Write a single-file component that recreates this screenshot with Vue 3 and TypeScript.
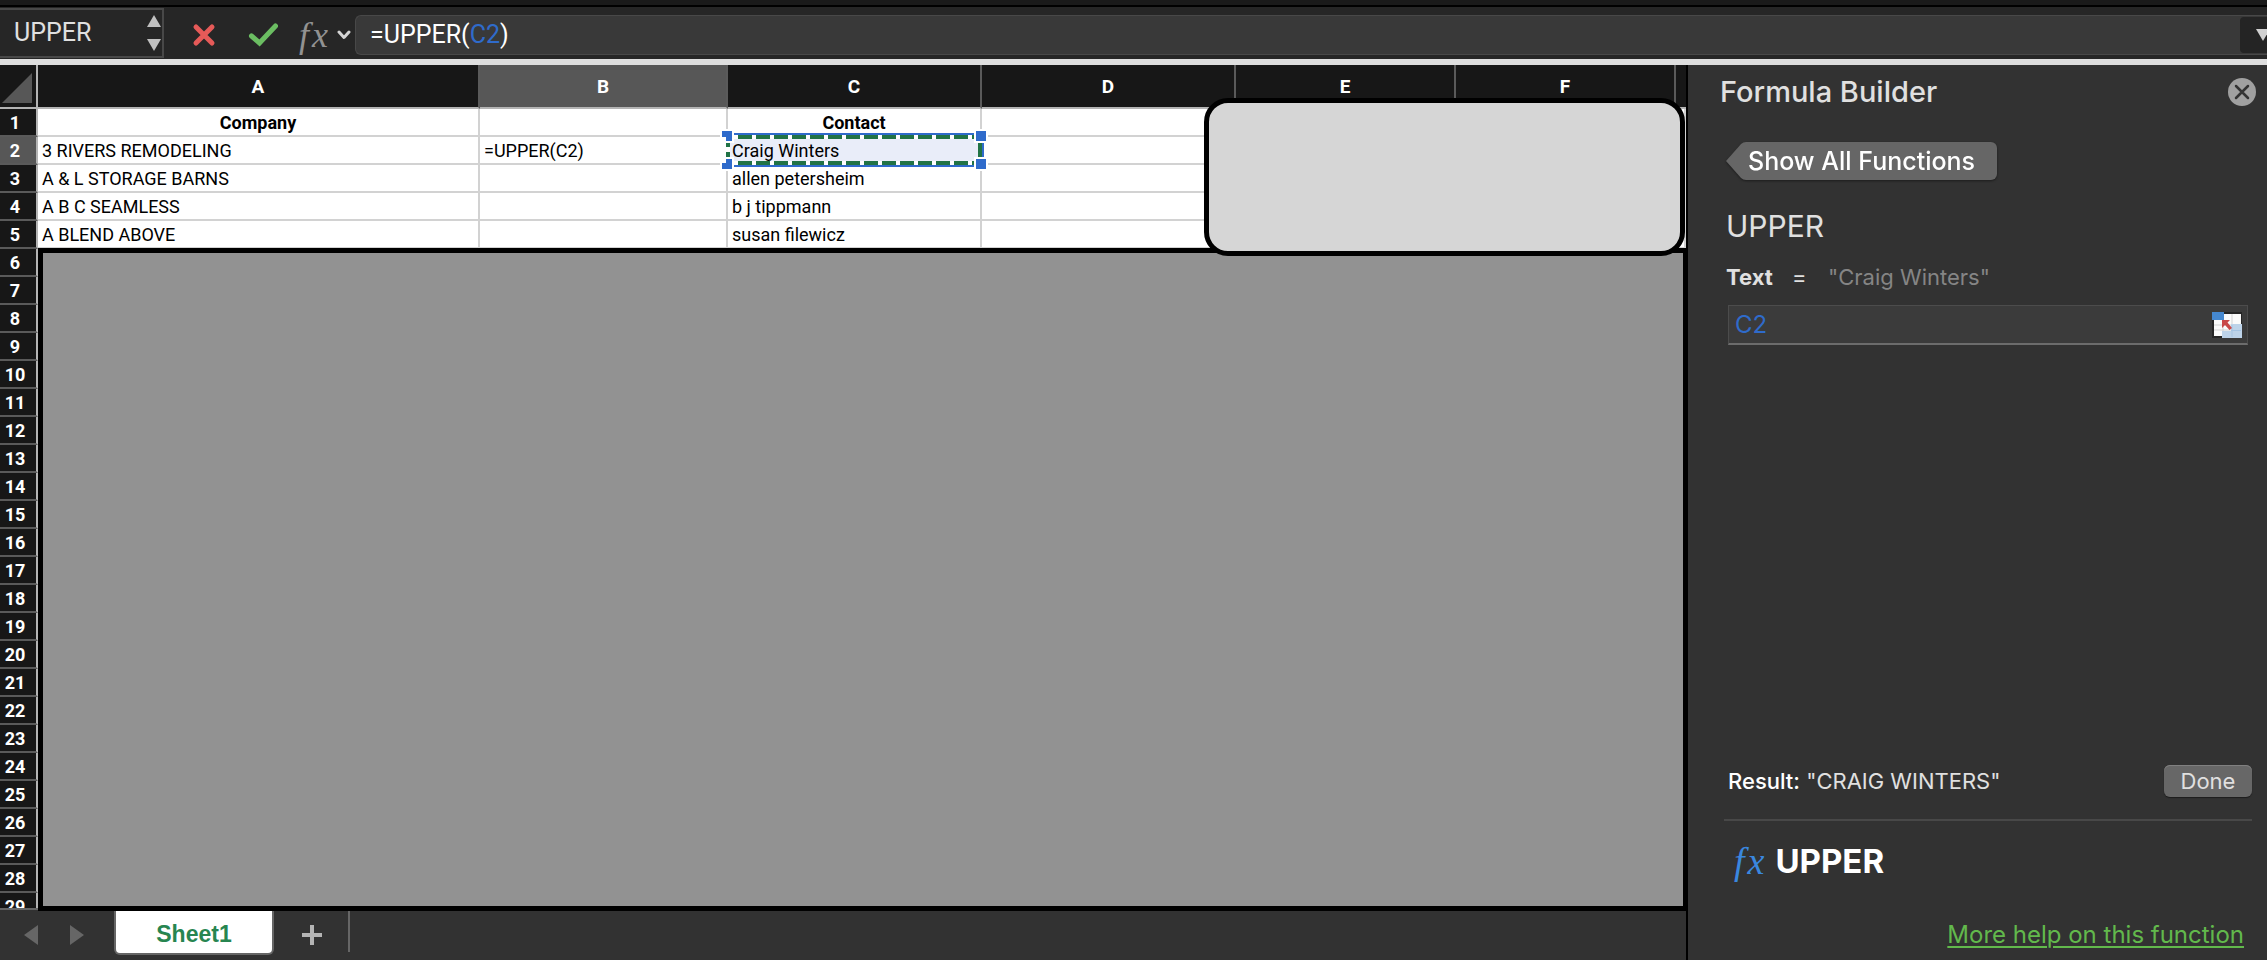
<script setup lang="ts">
import { computed, ref } from 'vue'

interface Column { name: string; active?: boolean }
interface Row { a: string; c: string }

const columns: Column[] = [
  { name: 'A' }, { name: 'B', active: true }, { name: 'C' }, { name: 'D' }, { name: 'E' }, { name: 'F' },
]

const records: Row[] = [
  { a: '3 RIVERS REMODELING', c: 'Craig Winters' },
  { a: 'A & L STORAGE BARNS', c: 'allen petersheim' },
  { a: 'A B C SEAMLESS', c: 'b j tippmann' },
  { a: 'A BLEND ABOVE', c: 'susan filewicz' },
]

const blankRows = Array.from({ length: 24 }, (_, i) => i + 6)

const nameBox = ref('UPPER')
const formula = ref('=UPPER(C2)')
const argument = ref('C2')

// Cell references in the formula are drawn in the colour of their range outline.
const tokens = computed(() =>
  formula.value.split(/([A-Z]+\d+)/).filter(Boolean).map(text => ({ text, isRef: /^[A-Z]+\d+$/.test(text) })),
)
</script>

<template>
  <div class="app">
    <header class="formula-bar">
      <div class="name-box">
        <input v-model="nameBox" class="name-input" type="text" aria-label="Name box">
        <div class="stepper">
          <button type="button" aria-label="Previous name"><svg width="14" height="12" viewBox="0 0 14 12"><path d="M7 0L14 12H0Z" fill="#c0c0c0" /></svg></button>
          <button type="button" aria-label="Next name"><svg width="14" height="12" viewBox="0 0 14 12"><path d="M0 0H14L7 12Z" fill="#c0c0c0" /></svg></button>
        </div>
      </div>
      <div class="tools">
        <button type="button" class="tool" aria-label="Cancel">
          <svg width="24" height="24" viewBox="0 0 24 24"><path d="M4 4L20 20M20 4L4 20" stroke="#e65a58" stroke-width="5" stroke-linecap="round" /></svg>
        </button>
        <button type="button" class="tool" aria-label="Enter">
          <svg width="30" height="24" viewBox="0 0 30 24"><path d="M3.500 13L11.500 20L27.500 3" fill="none" stroke="#6bbd62" stroke-width="5" stroke-linecap="round" stroke-linejoin="miter" /></svg>
        </button>
        <button type="button" class="tool fx" aria-label="Insert function">
          <span class="fx-mark"><span>f</span><span>x</span></span>
          <svg width="14" height="10" viewBox="0 0 14 10"><path d="M2 2L7 7.500L12 2" fill="none" stroke="#d4d4d4" stroke-width="3" stroke-linecap="round" stroke-linejoin="round" /></svg>
        </button>
      </div>
      <div class="formula-field">
        <div class="formula-text" aria-hidden="true"><span v-for="(t, i) in tokens" :key="i" :class="{ reference: t.isRef }">{{ t.text }}</span></div>
        <input v-model="formula" class="formula-input" type="text" aria-label="Formula">
        <button type="button" class="expand" aria-label="Expand formula bar"><svg width="14" height="12" viewBox="0 0 14 12"><path d="M0 0H14L7 12Z" fill="#d0d0d0" /></svg></button>
      </div>
    </header>

    <div class="body">
      <main class="workbook">
        <div class="grid-area">
          <div class="grid-scroll">
            <table class="grid">
              <colgroup>
                <col class="w-num"><col class="w-a"><col class="w-b"><col class="w-c"><col class="w-c"><col class="w-e"><col class="w-e"><col>
              </colgroup>
              <thead>
                <tr>
                  <th class="corner"><svg width="30" height="30" viewBox="0 0 30 30"><path d="M30 0V30H0Z" fill="#575757" /></svg></th>
                  <th v-for="col in columns" :key="col.name" scope="col" :class="{ active: col.active }">{{ col.name }}</th>
                  <th />
                </tr>
              </thead>
              <tbody>
                <tr>
                  <th scope="row">1</th>
                  <td class="title">Company</td><td /><td class="title">Contact</td><td /><td /><td /><td />
                </tr>
                <tr v-for="(r, i) in records" :key="r.a">
                  <th scope="row" :class="{ active: i === 0 }">{{ i + 2 }}</th>
                  <td>{{ r.a }}</td>
                  <td>{{ i === 0 ? formula : '' }}</td>
                  <td :class="{ picked: i === 0 }">
                    {{ r.c }}
                    <div v-if="i === 0" class="range">
                      <i class="edge top" /><i class="edge bottom" /><i class="edge left" /><i class="edge right" />
                      <i class="handle tl" /><i class="handle tr" /><i class="handle bl" /><i class="handle br" />
                    </div>
                  </td>
                  <td /><td /><td /><td />
                </tr>
                <tr v-for="n in blankRows" :key="n">
                  <th scope="row">{{ n }}</th>
                  <td colspan="7" />
                </tr>
              </tbody>
            </table>
          </div>
          <div class="cover" />
          <div class="card" />
        </div>

        <nav class="tabs" aria-label="Sheets">
          <button type="button" aria-label="Previous sheet"><svg width="14" height="20" viewBox="0 0 14 20"><path d="M14 0V20L0 10Z" fill="#666" /></svg></button>
          <button type="button" class="next" aria-label="Next sheet"><svg width="14" height="20" viewBox="0 0 14 20"><path d="M0 0V20L14 10Z" fill="#666" /></svg></button>
          <button type="button" class="tab">Sheet1</button>
          <button type="button" class="add" aria-label="Add sheet"><svg width="20" height="20" viewBox="0 0 20 20"><path d="M10 0V20M0 10H20" stroke="#b4b4b4" stroke-width="4" /></svg></button>
        </nav>
      </main>

      <aside class="panel">
        <div class="panel-head">
          <h2>Formula Builder</h2>
          <button type="button" class="close" aria-label="Close">
            <svg width="28" height="28" viewBox="0 0 28 28"><circle cx="14" cy="14" r="14" fill="#a0a0a0" /><path d="M8 8L20 20M20 8L8 20" stroke="#333" stroke-width="2.500" stroke-linecap="round" /></svg>
          </button>
        </div>
        <button type="button" class="show-all">
          <svg width="22" height="38" viewBox="0 0 22 38"><path d="M22 0H20Q17 0 15 2L0 19L15 36Q17 38 20 38H22Z" fill="#666" /></svg>
          <span>Show All Functions</span>
        </button>
        <h3>UPPER</h3>
        <div class="arg-line">
          <label for="arg-text">Text</label><span class="equals">=</span><span class="preview">"Craig Winters"</span>
        </div>
        <div class="arg-box">
          <input id="arg-text" v-model="argument" type="text">
          <button type="button" aria-label="Select range">
            <svg width="30" height="26" viewBox="0 0 30 26">
              <rect width="30" height="26" fill="#252525" /><rect x="2" y="2" width="27" height="22" fill="#fafafa" />
              <path d="M2 13H29M2 18H29M11 2V24M20 2V24" stroke="#d2d2d2" />
              <path d="M19 12H30V26H10V19H19Z" fill="#bdd3e9" /><path d="M19 18.500H29M20 13V25" stroke="#a5c4e3" />
              <rect width="12" height="8" fill="#4588d0" />
              <path d="M10 8H18L15.500 10.500L20 16L17.500 18L13 13L10 16Z" fill="#c84848" />
            </svg>
          </button>
        </div>
        <div class="spacer" />
        <div class="result-line">
          <p><b>Result:</b> "CRAIG WINTERS"</p>
          <button type="button" class="done">Done</button>
        </div>
        <hr>
        <div class="function-line"><span class="fx-mark blue"><span>f</span><span>x</span></span><h3 class="function-name">UPPER</h3></div>
        <a class="help" href="#help">More help on this function</a>
      </aside>
    </div>
  </div>
</template>

<style>
body { background: #323232; }
</style>

<style scoped>
* { box-sizing: border-box; }
.app { display: flex; flex-direction: column; height: 100vh; overflow: hidden; font-family: Roboto, sans-serif; color: #e0e0e0; }
button { margin: 0; padding: 0; border: 0; background: none; font: inherit; color: inherit; display: flex; align-items: center; justify-content: center; }
input { border: 0; padding: 0; background: none; outline: 0; font: inherit; color: inherit; min-width: 0; }
svg { display: block; flex: none; }
h2, h3, p { margin: 0; font-weight: 400; }

.formula-bar { display: flex; align-items: center; flex: none; height: 65px; padding-top: 5px; border-top: 5px solid #1a1a1a; border-bottom: 6px double #e8e8e8; background: #262626; box-shadow: inset 0 2px #000; font-size: 25px; }
.formula-bar { border-bottom: 6px solid #dedede; }
.name-box { display: flex; align-self: flex-start; align-items: center; width: 164px; height: 50px; margin-top: -2px; padding: 0 1px 0 14px; border: solid #484848; border-width: 2px 2px 2px 0; }
.name-input { flex: 1; height: 28px; margin-bottom: 2px; }
.stepper { display: flex; flex-direction: column; gap: 12px; }
.tools { display: flex; align-items: center; margin-left: 28px; }
.tool + .tool { margin-left: 32px; }
.tool.fx { justify-content: flex-end; gap: 9px; margin-left: 16px; width: 57px; }
.fx-mark { display: flex; gap: 3px; font: italic 36px/36px "Liberation Serif", serif; color: #929292; }
.formula-field { position: relative; display: flex; flex: 1; height: 40px; margin-left: 4px; border: solid #484848; border-width: 1px 0 1px 1px; border-radius: 6px 0 0 6px; background: #393939; line-height: 38px; }
.formula-text, .formula-input { padding-left: 14px; }
.formula-text { position: absolute; top: 0; left: 0; color: #fff; white-space: pre; }
.reference { color: #2f6bcb; }
.formula-input { position: relative; flex: 1; color: transparent; caret-color: #fff; }
.expand { flex: none; width: 27px; height: 36px; margin-top: 1px; padding-left: 16px; justify-content: flex-start; border-radius: 4px 0 0 4px; background: #242424; overflow: hidden; }

.body { display: flex; flex: 1; min-height: 0; }
.workbook { display: flex; flex-direction: column; flex: 1; min-width: 0; }
.grid-area { position: relative; flex: 1; min-height: 0; }
.grid-scroll { height: 100%; overflow: hidden; border-bottom: 2px solid #666; background: #fff; }
.grid { width: 100%; table-layout: fixed; border-collapse: separate; border-spacing: 0; font-size: 18px; line-height: 24px; color: #000; }
.w-num { width: 38px; }
.w-a { width: 442px; }
.w-b { width: 248px; }
.w-c { width: 254px; }
.w-e { width: 220px; }
th { padding: 2px 0 0; background: #171717; color: #fff; font-weight: 700; border: 0 solid #5a5a5a; }
thead th { height: 44px; border-right-width: 2px; border-bottom: 2px solid #b4b4b4; font-size: 19px; }
thead th:last-child { border-right: 0; }
thead th.active, tbody th.active { background: #575757; }
thead th.corner { padding: 8px 4px 4px 2px; border-right-color: #b4b4b4; }
tbody th { height: 28px; padding-right: 6px; border-right: 2px solid #b4b4b4; border-bottom-width: 2px; }
td { padding: 2px 4px 0; border: 0 solid #d2d2d2; border-width: 0 2px 2px 0; white-space: nowrap; }
td.title { text-align: center; font-weight: 700; }
td.picked { position: relative; background: #e9edf9; }

.range { position: absolute; inset: -6px; }
.edge { position: absolute; }
.top, .bottom { left: 12px; right: 12px; height: 6px; background: repeating-linear-gradient(90deg, #fff 0 4px, #217346 4px 18px); }
.top { top: 2px; border-top: 2px solid #2f6bcb; }
.bottom { bottom: 2px; border-bottom: 2px solid #2f6bcb; }
.left { left: 4px; top: 12px; bottom: 12px; width: 4px; background: linear-gradient(#217346 0 4px, #fff 4px 9px, #217346 9px); }
.right { right: 2px; top: 12px; bottom: 11px; width: 6px; background: #217346; border-right: 2px solid #2f6bcb; }
.handle { position: absolute; width: 10px; height: 10px; background: #2f6bcb; box-shadow: 0 0 0 2px #fff; }
.tl, .tr { top: 0; }
.bl, .br { bottom: 0; }
.tl, .bl { left: 0; }
.tr, .br { right: 0; }
.tl { background: linear-gradient(#fff, #fff) 0 100% / 4px 4px no-repeat #2f6bcb; }
.bl { background: linear-gradient(#fff, #fff) 0 0 / 4px 4px no-repeat #2f6bcb; }

.cover { position: absolute; z-index: 1; inset: 183px -2px -1px 38px; border: 5px solid #000; background: #929292; }
.card { position: absolute; z-index: 2; top: 33px; left: 1204px; right: 1px; height: 158px; border: 5px solid #000; border-radius: 24px; background: #d6d6d6; }

.tabs { display: flex; align-items: center; flex: none; height: 50px; padding-left: 24px; background: #323232; }
.next { margin-left: 32px; }
.tab { align-self: flex-start; height: 45px; width: 160px; margin-left: 30px; border: 2px solid #666; border-top: 0; border-radius: 0 0 6px 6px; background: #fff; font: 700 23px "Liberation Sans", sans-serif; color: #278550; padding-top: 5px; }
.add { align-self: flex-start; width: 76px; height: 42px; border-right: 2px solid #666; padding: 8px 0 0 2px; }

.panel { display: flex; flex-direction: column; width: 581px; flex: none; padding: 0 15px 10px 38px; border-left: 2px solid #000; background: #323232; font-family: Inter, sans-serif; font-size: 22px; line-height: 30px; }
.panel-head { display: flex; align-items: center; justify-content: space-between; height: 54px; margin: 0 -4px 0 -6px; }
h2 { font-size: 29px; font-weight: 500; }
.show-all { align-self: flex-start; height: 38px; margin-top: 23px; filter: drop-shadow(0 1px 1px #1c1c1c); }
.show-all span { height: 38px; padding-right: 22px; background: #666; border-radius: 0 6px 6px 0; font-size: 25px; font-weight: 500; line-height: 38px; color: #fff; }
.panel > h3 { margin-top: 26px; font-size: 30px; line-height: 40px; }
.arg-line { display: flex; margin-top: 16px; }
.arg-line label { width: 66px; font-weight: 700; }
.equals { width: 36px; }
.preview { color: #858585; }
.arg-box { display: flex; align-items: center; height: 40px; margin: 13px 4px 0 2px; padding: 0 5px 0 6px; border: 1px solid #4c4c4c; border-bottom: 2px solid #6c6c6c; background: #3b3b3b; }
.arg-box input { flex: 1; height: 36px; font-size: 24px; color: #2f6bcb; }
.spacer { flex: 1; }
.result-line { display: flex; align-items: center; justify-content: space-between; padding-left: 2px; }
.result-line b { font-weight: 500; color: #fff; }
.done { width: 88px; height: 32px; border-radius: 6px; background: #676767; box-shadow: inset 0 1px #808080, 0 1px 1px #1c1c1c; }
hr { align-self: stretch; height: 2px; margin: 22px 0 20px -2px; border: 0; background: #484848; }
.function-line { display: flex; align-items: center; gap: 11px; height: 40px; padding-left: 8px; }
.fx-mark.blue { font-size: 38px; line-height: 40px; color: #3a87df; }
.function-name { font-size: 33px; line-height: 40px; font-weight: 700; color: #fff; }
.help { align-self: flex-end; margin: 39px 8px 0 0; font-size: 24px; color: #62b94c; text-decoration-thickness: 2px; text-underline-offset: 3px; }
</style>
